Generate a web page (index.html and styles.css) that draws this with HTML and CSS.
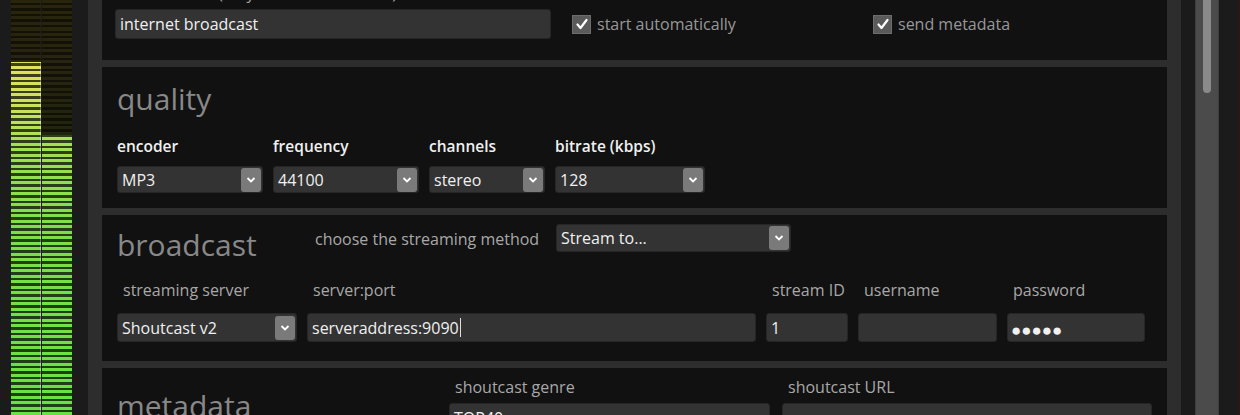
FILE: index.html
```html
<!DOCTYPE html>
<html lang="en">
<head>
    <meta charset="UTF-8">
    <title>Stream settings</title>
    <link rel="stylesheet" href="styles.css">
</head>
<body>

    <aside class="meters">
        <div class="meter"><div class="meter-off" style="height:62px"></div></div>
        <div class="meter"><div class="meter-off" style="height:135px"></div></div>
    </aside>

    <main class="settings">
        <section class="panel panel-name">
            <div class="name-label">stream name (only visible to listeners)</div>
            <div class="name-row">
                <div class="field">internet broadcast</div>
                <div class="check">
                    <span class="box"><svg width="14" height="14" viewBox="0 0 14 14"><polyline points="2.5,7.5 5.5,11 11.5,3" fill="none" stroke="#fff" stroke-width="2.2" stroke-linecap="round" stroke-linejoin="round"/></svg></span>
                    start automatically
                </div>
                <div class="check">
                    <span class="box"><svg width="14" height="14" viewBox="0 0 14 14"><polyline points="2.5,7.5 5.5,11 11.5,3" fill="none" stroke="#fff" stroke-width="2.2" stroke-linecap="round" stroke-linejoin="round"/></svg></span>
                    send metadata
                </div>
            </div>
        </section>

        <section class="panel panel-quality">
            <h2>quality</h2>
            <div class="quality-grid">
                <div class="label-strong">encoder</div>
                <div class="label-strong">frequency</div>
                <div class="label-strong">channels</div>
                <div class="label-strong">bitrate (kbps)</div>
                <div class="select"><span>MP3</span><span class="arrow"><svg width="10" height="6" viewBox="0 0 10 6"><polyline points="1.5,1 5,4.5 8.5,1" fill="none" stroke="#fff" stroke-width="1.8"/></svg></span></div>
                <div class="select"><span>44100</span><span class="arrow"><svg width="10" height="6" viewBox="0 0 10 6"><polyline points="1.5,1 5,4.5 8.5,1" fill="none" stroke="#fff" stroke-width="1.8"/></svg></span></div>
                <div class="select"><span>stereo</span><span class="arrow"><svg width="10" height="6" viewBox="0 0 10 6"><polyline points="1.5,1 5,4.5 8.5,1" fill="none" stroke="#fff" stroke-width="1.8"/></svg></span></div>
                <div class="select"><span>128</span><span class="arrow"><svg width="10" height="6" viewBox="0 0 10 6"><polyline points="1.5,1 5,4.5 8.5,1" fill="none" stroke="#fff" stroke-width="1.8"/></svg></span></div>
            </div>
        </section>

        <section class="panel panel-broadcast">
            <div class="method-row">
                <h2>broadcast</h2>
                <div class="method-label">choose the streaming method</div>
                <div class="select select-method"><span>Stream to...</span><span class="arrow"><svg width="10" height="6" viewBox="0 0 10 6"><polyline points="1.5,1 5,4.5 8.5,1" fill="none" stroke="#fff" stroke-width="1.8"/></svg></span></div>
            </div>
            <div class="server-grid">
                <div class="label">streaming server</div>
                <div class="label">server:port</div>
                <div class="label">stream ID</div>
                <div class="label">username</div>
                <div class="label">password</div>
                <div class="select"><span>Shoutcast v2</span><span class="arrow"><svg width="10" height="6" viewBox="0 0 10 6"><polyline points="1.5,1 5,4.5 8.5,1" fill="none" stroke="#fff" stroke-width="1.8"/></svg></span></div>
                <div class="field">serveraddress:9090<span class="caret"></span></div>
                <div class="field">1</div>
                <div class="field"></div>
                <div class="field field-password">●●●●●</div>
            </div>
        </section>

        <section class="panel panel-meta">
            <h2>metadata</h2>
            <div class="meta-col">
                <div class="label">shoutcast genre</div>
                <div class="field">TOP40</div>
            </div>
            <div class="meta-col">
                <div class="label">shoutcast URL</div>
                <div class="field"></div>
            </div>
        </section>
    </main>

    <div class="scroll">
        <div class="track"><div class="thumb"></div></div>
    </div>

</body>
</html>
```

FILE: styles.css
```css
body {
    margin: 0;
    height: 415px;
    overflow: hidden;
    display: flex;
    background-color: #1b1b1b;
    font-family: 'Open Sans', 'Noto Sans', sans-serif;
    font-size: 16px;
    color: #e8e8e8;
}
h2 {
    margin: 0;
    font-size: 30px;
    font-weight: 400;
    line-height: 40px;
    color: #888;
}

/* level meters */
.meters {
    flex: none;
    width: 88px;
    box-sizing: border-box;
    padding-left: 11px;
    display: flex;
    gap: 1px;
}
.meter {
    position: relative;
    width: 30px;
    height: 100%;
    background:
        repeating-linear-gradient(to bottom, transparent 0, transparent 3px, rgba(0, 0, 0, 0.72) 3px, rgba(0, 0, 0, 0.72) 5.5px),
        linear-gradient(to bottom, #f2e64a 0, #e4e25a 60px, #c8e25a 110px, #9ee052 150px, #7ede4a 230px, #66e242 100%);
}
.meter:first-child {
    box-shadow: inset -1px 0 rgba(255, 255, 255, 0.3);
}
.meter-off {
    background: rgba(12, 10, 4, 0.88);
}

/* settings column */
.settings {
    flex: none;
    width: 1093px;
    box-sizing: border-box;
    padding: 0 14px;
    background-color: #2d2d2d;
    display: flex;
    flex-direction: column;
    gap: 7px;
}
.panel {
    background-color: #111;
    padding: 0 15px;
    flex: none;
}
.label, .name-label, .method-label {
    color: #a8a8a8;
    line-height: 20px;
}
.label-strong {
    color: #f0f0f0;
    font-size: 15.5px;
    font-weight: 600;
    line-height: 20px;
}
.field, .select {
    box-sizing: border-box;
    background-color: #333;
    border: 1px solid #262626;
    border-radius: 3px;
    color: #f0f0f0;
    padding: 0 4px;
    display: flex;
    align-items: center;
    white-space: nowrap;
    overflow: hidden;
}
.select {
    justify-content: space-between;
    padding-right: 1px;
}
.arrow {
    width: 20px;
    height: 24px;
    background-color: #7a7a7a;
    border-radius: 3px;
    display: flex;
    align-items: center;
    justify-content: center;
}
.caret {
    display: inline-block;
    width: 1px;
    height: 19px;
    background: #ddd;
    margin-left: 1px;
}

/* first panel */
.panel-name {
    margin-top: -27px;
    padding: 10px 0 21px 13px;
}
.name-label {
    margin-bottom: 6px;
}
.name-row {
    display: grid;
    grid-template-columns: 436px 280px 1fr;
    column-gap: 21px;
    align-items: center;
}
.name-row .field {
    height: 30px;
}
.check {
    display: flex;
    align-items: center;
    gap: 6px;
    color: #989898;
}
.box {
    width: 19px;
    height: 19px;
    box-sizing: border-box;
    background-color: #5a5a5a;
    border: 1px solid #6c6c6c;
    display: flex;
    align-items: center;
    justify-content: center;
}

/* quality */
.panel-quality {
    padding-top: 12px;
    padding-bottom: 15px;
}
.panel-quality h2 {
    margin-bottom: 17px;
}
.quality-grid {
    display: grid;
    grid-template-columns: 146px 146px 116px 150px;
    column-gap: 10px;
    row-gap: 10px;
}
.quality-grid .select {
    height: 27px;
}

/* broadcast */
.panel-broadcast {
    padding-top: 9px;
    padding-bottom: 19px;
}
.method-row {
    display: flex;
    align-items: flex-start;
}
.method-row h2 {
    width: 198px;
    margin-top: 1px;
}
.method-label {
    width: 241px;
    margin-top: 5px;
}
.select-method {
    width: 235px;
    height: 28px;
}
.server-grid {
    margin-top: 15px;
    display: grid;
    grid-template-columns: 180px 449px 82px 139px 138px;
    column-gap: 10px;
    row-gap: 13px;
}
.server-grid .label {
    padding-left: 6px;
}
.server-grid .field, .server-grid .select {
    height: 29px;
}
.field-password {
    font-size: 17px;
    padding-top: 4px;
    padding-left: 3px;
}

/* metadata */
.panel-meta {
    padding-top: 9px;
    display: grid;
    grid-template-columns: 320px 321px 370px;
    column-gap: 12px;
    align-items: start;
    height: 60px;
}
.panel-meta h2 {
    margin-top: 9px;
}
.meta-col .label {
    padding-left: 6px;
    margin-bottom: 6px;
}
.meta-col .field {
    height: 29px;
}

/* scroll bar */
.scroll {
    flex: 1;
    padding-left: 14px;
    display: flex;
    border-right: 2px solid #2a1717;
}
.track {
    width: 24px;
    box-sizing: border-box;
    background-color: #4b4b4b;
    border-left: 1px solid #3d3d3d;
    border-right: 1px solid #3d3d3d;
    padding: 0 7px;
}
.thumb {
    height: 93px;
    background-color: #8a8a8a;
    border-radius: 0 0 5px 5px;
}
```
